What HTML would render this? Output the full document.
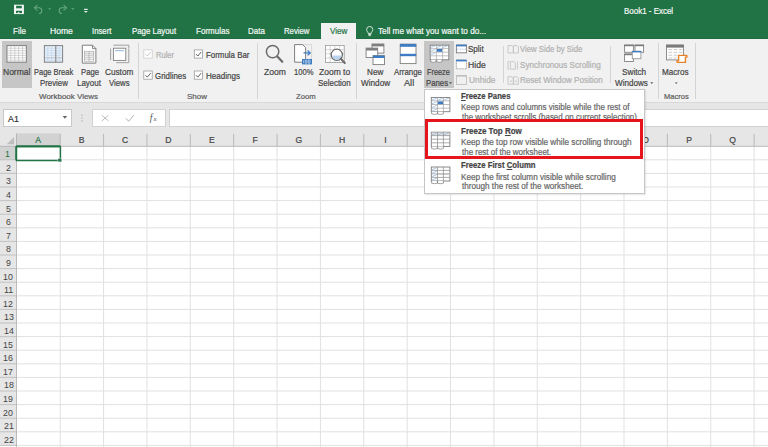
<!DOCTYPE html>
<html><head><meta charset="utf-8"><style>
html,body{margin:0;padding:0;}
body{width:768px;height:447px;overflow:hidden;position:relative;background:#fff;font-family:"Liberation Sans",sans-serif;}
.b{position:absolute;}
.t{position:absolute;white-space:nowrap;transform-origin:0 0;font-family:"Liberation Sans",sans-serif;-webkit-text-stroke:0.2px currentColor;}
body.textonly .b{display:none} body.textonly .t{color:#000 !important} body.textonly{background:#fff}
u{text-decoration:underline;text-underline-offset:1.2px;text-decoration-thickness:0.7px}
</style></head><body>
<div class="b" style="left:0;top:0;width:768px;height:38.8px;background:#217346"></div><div class="b" style="left:0;top:37.6px;width:768px;height:1.2px;background:#1f6a40"></div><div class="b" style="left:0;top:38.8px;width:768px;height:62.8px;background:#f1f1f1"></div><div class="b" style="left:320.8px;top:22.8px;width:35.1px;height:17px;background:#f1f1f1"></div><div class="b" style="left:0;top:101.6px;width:768px;height:1.4px;background:#d9d9d9"></div><div class="b" style="left:0;top:103px;width:768px;height:30.4px;background:#e6e6e6"></div><div class="b" style="left:138.4px;top:42.5px;width:1px;height:56.3px;background:#d4d4d4"></div><div class="b" style="left:257.2px;top:42.5px;width:1px;height:56.3px;background:#d4d4d4"></div><div class="b" style="left:356.3px;top:42.5px;width:1px;height:56.3px;background:#d4d4d4"></div><div class="b" style="left:658.2px;top:42.5px;width:1px;height:56.3px;background:#d4d4d4"></div><div class="b" style="left:694.5px;top:42.5px;width:1px;height:56.3px;background:#d4d4d4"></div><div class="b" style="left:502.5px;top:46.4px;width:1px;height:36.6px;background:#d4d4d4"></div><div class="b" style="left:610.4px;top:46.4px;width:1px;height:36.6px;background:#d4d4d4"></div><div class="b" style="left:2.1px;top:41.2px;width:30.2px;height:46.4px;background:#c6c6c6"></div><div class="b" style="left:424.4px;top:41.2px;width:29.4px;height:46.4px;background:#c6c6c6"></div><div class="b" style="left:2.75px;top:109.25px;width:69.15px;height:17.5px;background:#fff;border:1px solid #c8c8c8;box-sizing:border-box"></div><div class="b" style="left:92.25px;top:109.25px;width:74px;height:17.5px;background:#fff;border:1px solid #d2d2d2;box-sizing:border-box"></div><div class="b" style="left:169.4px;top:109.25px;width:610px;height:17.5px;background:#fff;border:1px solid #d2d2d2;box-sizing:border-box"></div><svg class="b" style="left:0;top:0" width="768" height="135" viewBox="0 0 768 135">
<!-- QAT -->
<rect x="14" y="4.7" width="9.9" height="9.4" fill="#f2f7f4"/>
<rect x="16.1" y="5.8" width="5.7" height="2.5" fill="#217346"/>
<rect x="16" y="10.8" width="6" height="2.3" fill="#217346"/>
<rect x="17.8" y="12.1" width="1.6" height="1.0" fill="#f2f7f4"/>
<g fill="none" stroke="#66a583" stroke-width="1.1" stroke-linecap="round">
<path d="M37 5.3 L34.5 7.8 L37 10.2"/>
<path d="M34.8 7.8 H39.4 A2.9 2.9 0 0 1 39.4 13.5"/>
<path d="M63.9 5.3 L66.4 7.8 L63.9 10.2"/>
<path d="M66.1 7.8 H61.5 A2.9 2.9 0 0 0 61.5 13.5"/>
</g>
<path d="M48.2 8.3 h2.8 l-1.4 1.7z M71.1 8.3 h3.4 l-1.7 1.8z" fill="#66a583"/>
<rect x="84" y="8.8" width="3.7" height="1.1" fill="#f2f7f4"/>
<path d="M83.9 10.9 h3.9 l-1.95 1.9z" fill="#f2f7f4"/>
<!-- lightbulb -->
<path d="M366.6 29.6 a3.1 3.1 0 1 1 6.2 0 c0 1.6 -1.5 2.4 -1.5 3.8 h-3.2 c0 -1.4 -1.5 -2.2 -1.5 -3.8z M368.2 34.6 h3 M368.6 35.6 h2.2" fill="none" stroke="#eef5f1" stroke-width="0.85"/>

<!-- Normal -->
<rect x="7" y="45.6" width="19.4" height="16.6" fill="#fff" stroke="#7d7d7d" stroke-width="1"/>
<g stroke="#c2c2c2" stroke-width="0.7">
<path d="M7 48.2h19.4M7 50.6h19.4M7 53h19.4M7 55.4h19.4M7 57.8h19.4M7 60.2h19.4"/>
<path d="M10.8 45.6v16.6M14.8 45.6v16.6M18.6 45.6v16.6M22.6 45.6v16.6"/>
</g>
<!-- Page break preview -->
<rect x="44.4" y="45.6" width="18.2" height="16.6" fill="#e8f1fb" stroke="#7d7d7d" stroke-width="1"/>
<g stroke="#bcd2ea" stroke-width="0.6">
<path d="M44.4 48.2h18M44.4 50.6h18M44.4 53h18M44.4 55.4h18M44.4 60.2h18"/>
<path d="M47.8 45.6v16.6M51.6 45.6v16.6M59.2 45.6v16.6"/>
</g>
<path d="M55.8 45.6v16.6" stroke="#7d7d7d" stroke-width="1"/>
<path d="M44.4 57.8h18.2" stroke="#9a9a9a" stroke-width="0.9" stroke-dasharray="1.2 0.8"/>
<!-- Page Layout -->
<path d="M82.3 45.2 h10.2 l3.4 3.4 v14.5 h-13.6z" fill="#fff" stroke="#7d7d7d" stroke-width="1"/>
<path d="M92.5 45.2 v3.4 h3.4" fill="none" stroke="#7d7d7d" stroke-width="0.9"/>
<g stroke="#9a9a9a" stroke-width="0.6" fill="none">
<rect x="84.4" y="51.2" width="9.4" height="10"/>
<path d="M84.4 53.2h9.4M84.4 55.2h9.4M84.4 57.2h9.4M84.4 59.2h9.4M89.1 51.2v10"/>
</g>
<!-- Custom views -->
<rect x="113.4" y="48.2" width="12.4" height="12.2" fill="#fff" stroke="#7a7a7a" stroke-width="0.85"/>
<path d="M115 50.6h9" stroke="#a9c4e6" stroke-width="1.3"/>
<path d="M113.4 45.2 h12.4 M110.6 48.6 v11.6 M116.4 62.7 h12.4 v-14.2" fill="none" stroke="#8a8a8a" stroke-width="0.8"/>
<path d="M125.8 45.2 h3 v3" fill="none" stroke="#8a8a8a" stroke-width="0.8"/>
<!-- Zoom -->
<circle cx="272.6" cy="51.6" r="6.2" fill="none" stroke="#6b6b6b" stroke-width="1.5"/>
<path d="M277.3 56.4 l5 5.4" stroke="#6b6b6b" stroke-width="2.2" stroke-linecap="round"/>
<!-- 100% -->
<path d="M294.6 44.6 h8 l3 3 v14.6 h-11z" fill="#fff" stroke="#7d7d7d" stroke-width="1"/>
<path d="M302.6 44.6 h9 v14" fill="none" stroke="#9a9a9a" stroke-width="0.6" stroke-dasharray="1 1"/>
<path d="M303.5 52.9 h6.5 M307.6 50.4 l2.6 2.5 l-2.6 2.5" fill="none" stroke="#3d7cc2" stroke-width="1.3"/>
<rect x="302" y="59" width="10" height="5.4" fill="#3d7cc2"/>
<path d="M303.6 60.2v3M305.4 60.2h1.6v3h-1.6zM308.4 60.2h1.6v3h-1.6z" stroke="#fff" stroke-width="0.5" fill="none"/>
<!-- Zoom to selection -->
<rect x="325.4" y="45.4" width="18.8" height="17" fill="#fff" stroke="#9a9a9a" stroke-width="0.8"/>
<path d="M325.4 49.6h18.8M325.4 53.8h18.8M325.4 58h18.8M330.2 45.4v17M334.8 45.4v17M339.6 45.4v17" stroke="#b8b8b8" stroke-width="0.6"/>
<circle cx="336.8" cy="54.8" r="5.6" fill="#fff" stroke="#6b6b6b" stroke-width="1.3"/>
<path d="M332.2 55.4 a4.6 4.6 0 0 0 9.2 0z" fill="#bcd3ee"/>
<path d="M340.8 58.8 l4 4.2" stroke="#6b6b6b" stroke-width="2" stroke-linecap="round"/>
<!-- New window -->
<rect x="372" y="44" width="11.9" height="9.1" fill="#fff" stroke="#7d7d7d" stroke-width="0.9"/>
<rect x="372" y="44" width="11.9" height="2.4" fill="#7d7d7d"/>
<rect x="366.1" y="48.1" width="11.6" height="9.4" fill="#fff" stroke="#7d7d7d" stroke-width="0.9"/>
<rect x="366.1" y="48.1" width="11.6" height="2.4" fill="#7d7d7d"/>
<rect x="373" y="55.6" width="11.5" height="9" fill="#fff" stroke="#7d7d7d" stroke-width="0.9"/>
<rect x="373" y="55.6" width="11.5" height="2.4" fill="#3d7cc2"/>
<!-- Arrange all -->
<rect x="400.2" y="44.2" width="15.8" height="19.4" fill="#fff" stroke="#7d7d7d" stroke-width="0.9"/>
<rect x="400" y="43.9" width="16.2" height="2.9" fill="#3d7cc2"/>
<rect x="400" y="53.8" width="16.2" height="2.4" fill="#3d7cc2"/>
<!-- Freeze panes (ribbon) -->
<rect x="430.2" y="45.2" width="18.6" height="14.6" fill="#fff" stroke="#7d7d7d" stroke-width="0.9"/>
<path d="M430.2 48.6h18.6M430.2 52.2h18.6M430.2 55.8h18.6M436.4 45.2v14.6M442.6 45.2v14.6" stroke="#9a9a9a" stroke-width="0.6"/>
<path d="M430.6 47.6 l5 -2 M430.6 51.2 l5 -2 M436.8 47.6 l5 -2 M442.8 47.6 l5 -2 M430.6 54.8 l5 -2" stroke="#8fb4e0" stroke-width="0.7"/>
<rect x="436.8" y="49" width="5.4" height="2.8" fill="#3d7cc2"/>
<path d="M430.8 59.8 v2 q2.6 1 5.2 0 v-2 M436.8 59.8 v2 q2.6 1 5.2 0 v-2" fill="#fff" stroke="#7d7d7d" stroke-width="0.7"/>
<!-- split -->
<rect x="456.4" y="45" width="10" height="7.8" fill="#fff" stroke="#7d7d7d" stroke-width="0.9"/>
<rect x="456.1" y="44.7" width="10.6" height="1.7" fill="#3d7cc2"/>
<path d="M457 49.2h9" stroke="#8fb4e0" stroke-width="0.7" stroke-dasharray="1 0.6"/>
<!-- hide -->
<rect x="456.4" y="60" width="10" height="8.8" fill="#fff" stroke="#9a9a9a" stroke-width="0.8" stroke-dasharray="1.2 0.4"/>
<rect x="456.1" y="59.7" width="10.6" height="1.7" fill="#3d7cc2"/>
<!-- unhide -->
<rect x="456.4" y="75.6" width="10" height="8.8" fill="none" stroke="#bdbdbd" stroke-width="0.9"/>
<rect x="456.1" y="75.3" width="10.6" height="1.3" fill="#bdbdbd"/>
<!-- view side by side etc -->
<g fill="none" stroke="#c0c0c0" stroke-width="0.8">
<path d="M508 45.6h4l1.4 1.4v6h-5.4z M513.4 45.6h3.6l1.4 1.4v6h-5z"/>
<path d="M508 61.4h1.2M508 61.4v8M508 69.4h1.2 M510.4 61.6h3.6l1.4 1.4v6.2h-5z M517.6 61.4v8.2"/>
<path d="M508 76.8h4l1.4 1.4v6h-5.4z M513.4 76.8h3.6l1.4 1.4v6h-5z M510 80.5 l0.8 1.5 l0.8 -1.5 M515 80.5 l0.8 1.5 l0.8 -1.5"/>
</g>
<!-- Switch windows -->
<rect x="624.6" y="45.1" width="8.8" height="7.2" fill="#fff" stroke="#808080" stroke-width="0.9"/>
<rect x="624.2" y="44.7" width="9.6" height="1.5" fill="#7a7a7a"/>
<rect x="635" y="45.1" width="8.6" height="7.2" fill="#fff" stroke="#808080" stroke-width="0.9"/>
<rect x="634.6" y="44.7" width="9.4" height="1.5" fill="#7a7a7a"/>
<rect x="624.6" y="54.1" width="8.8" height="7.4" fill="#fff" stroke="#808080" stroke-width="0.9"/>
<rect x="624.2" y="53.7" width="9.6" height="1.5" fill="#7a7a7a"/>
<rect x="632.3" y="51.3" width="8.6" height="7.4" fill="#fff" stroke="#9a9a9a" stroke-width="0.9"/>
<rect x="631.9" y="50.9" width="9.4" height="1.5" fill="#3d7cc2"/>
<!-- Macros -->
<rect x="666.5" y="45.1" width="16.9" height="14.8" fill="#fff" stroke="#808080" stroke-width="0.9"/>
<rect x="666.1" y="44.7" width="17.7" height="2.9" fill="#7a7a7a"/>
<path d="M668.4 49.6h3.6M673.6 49.6h3.6M678.8 49.6h3.4M668.4 52.4h3.6M673.6 52.4h3.6M678.8 52.4h3.4M668.4 55.2h3.6M673.6 55.2h3.6M668.4 58h3.6M673.6 58h3" stroke="#bdbdbd" stroke-width="0.8"/>
<path d="M678.6 55.4 h7.6 a0.9 0.9 0 0 1 0 1.8 h-0.8 v5.2 h-7.6 a0.9 0.9 0 0 1 0 -1.8 h0.8z" fill="#fff" stroke="#e8832a" stroke-width="1.4"/>
<!-- dropdown arrows -->
<path d="M448.9 82.2 h3.2 l-1.6 1.8z M650.3 82.2 h3 l-1.5 1.7z M674.7 82.4 h3 l-1.5 1.7z" fill="#555"/>
<!-- checkboxes -->
<g fill="#fff" stroke-width="0.8">
<rect x="143.8" y="49.9" width="8.4" height="8.2" stroke="#cdcdcd"/>
<rect x="143.8" y="71" width="8.4" height="8.2" stroke="#9c9c9c"/>
<rect x="194.3" y="49.9" width="8.2" height="8.2" stroke="#9c9c9c"/>
<rect x="194.3" y="71" width="8.2" height="8.2" stroke="#9c9c9c"/>
</g>
<g fill="none" stroke-width="0.9">
<path d="M145.6 54.2 l1.7 1.8 l3.4 -4" stroke="#c6c6c6"/>
<path d="M145.6 75.3 l1.7 1.8 l3.4 -4" stroke="#4a4a4a"/>
<path d="M196.1 54.2 l1.7 1.8 l3.4 -4" stroke="#4a4a4a"/>
<path d="M196.1 75.3 l1.7 1.8 l3.4 -4" stroke="#4a4a4a"/>
</g>
<!-- formula bar glyphs -->
<path d="M62.6 115.9 h4.6 l-2.3 2.8z" fill="#666"/>
<g fill="#a6a6a6"><circle cx="82" cy="115.2" r="0.65"/><circle cx="82" cy="118.1" r="0.65"/><circle cx="82" cy="121" r="0.65"/></g>
<path d="M101.8 115.2 l6.6 5.8 M108.4 115.2 l-6.6 5.8" stroke="#b3b3b3" stroke-width="0.9"/>
<path d="M125.8 118.2 l2.9 3.1 l5.1 -6.1" fill="none" stroke="#b3b3b3" stroke-width="1"/>
<text x="149.8" y="120.6" font-family="Liberation Serif" font-style="italic" font-size="9.5" fill="#555">f</text>
<text x="153.4" y="121.3" font-family="Liberation Serif" font-style="italic" font-size="7" fill="#555">x</text>
</svg>
<svg class="b" style="left:0;top:0" width="768" height="447" viewBox="0 0 768 447"><rect x="0" y="130" width="768" height="16.19999999999999" fill="#e6e6e6"/><rect x="0" y="146.2" width="16.3" height="300.8" fill="#e6e6e6"/><rect x="0" y="445.4" width="768" height="5" fill="#fff"/><rect x="16.3" y="133.4" width="43.900000000000006" height="12.799999999999983" fill="#d2d2d2"/><rect x="0" y="146.2" width="16.3" height="13.6" fill="#d2d2d2"/><line x1="60.20" y1="146.2" x2="60.20" y2="447" stroke="#e1e1e1" stroke-width="1"/><line x1="60.20" y1="133.8" x2="60.20" y2="146.2" stroke="#a9a9a9" stroke-width="0.75"/><line x1="103.57" y1="146.2" x2="103.57" y2="447" stroke="#e1e1e1" stroke-width="1"/><line x1="103.57" y1="133.8" x2="103.57" y2="146.2" stroke="#a9a9a9" stroke-width="0.75"/><line x1="146.94" y1="146.2" x2="146.94" y2="447" stroke="#e1e1e1" stroke-width="1"/><line x1="146.94" y1="133.8" x2="146.94" y2="146.2" stroke="#a9a9a9" stroke-width="0.75"/><line x1="190.31" y1="146.2" x2="190.31" y2="447" stroke="#e1e1e1" stroke-width="1"/><line x1="190.31" y1="133.8" x2="190.31" y2="146.2" stroke="#a9a9a9" stroke-width="0.75"/><line x1="233.68" y1="146.2" x2="233.68" y2="447" stroke="#e1e1e1" stroke-width="1"/><line x1="233.68" y1="133.8" x2="233.68" y2="146.2" stroke="#a9a9a9" stroke-width="0.75"/><line x1="277.05" y1="146.2" x2="277.05" y2="447" stroke="#e1e1e1" stroke-width="1"/><line x1="277.05" y1="133.8" x2="277.05" y2="146.2" stroke="#a9a9a9" stroke-width="0.75"/><line x1="320.42" y1="146.2" x2="320.42" y2="447" stroke="#e1e1e1" stroke-width="1"/><line x1="320.42" y1="133.8" x2="320.42" y2="146.2" stroke="#a9a9a9" stroke-width="0.75"/><line x1="363.79" y1="146.2" x2="363.79" y2="447" stroke="#e1e1e1" stroke-width="1"/><line x1="363.79" y1="133.8" x2="363.79" y2="146.2" stroke="#a9a9a9" stroke-width="0.75"/><line x1="407.16" y1="146.2" x2="407.16" y2="447" stroke="#e1e1e1" stroke-width="1"/><line x1="407.16" y1="133.8" x2="407.16" y2="146.2" stroke="#a9a9a9" stroke-width="0.75"/><line x1="450.53" y1="146.2" x2="450.53" y2="447" stroke="#e1e1e1" stroke-width="1"/><line x1="450.53" y1="133.8" x2="450.53" y2="146.2" stroke="#a9a9a9" stroke-width="0.75"/><line x1="493.90" y1="146.2" x2="493.90" y2="447" stroke="#e1e1e1" stroke-width="1"/><line x1="493.90" y1="133.8" x2="493.90" y2="146.2" stroke="#a9a9a9" stroke-width="0.75"/><line x1="537.27" y1="146.2" x2="537.27" y2="447" stroke="#e1e1e1" stroke-width="1"/><line x1="537.27" y1="133.8" x2="537.27" y2="146.2" stroke="#a9a9a9" stroke-width="0.75"/><line x1="580.64" y1="146.2" x2="580.64" y2="447" stroke="#e1e1e1" stroke-width="1"/><line x1="580.64" y1="133.8" x2="580.64" y2="146.2" stroke="#a9a9a9" stroke-width="0.75"/><line x1="624.01" y1="146.2" x2="624.01" y2="447" stroke="#e1e1e1" stroke-width="1"/><line x1="624.01" y1="133.8" x2="624.01" y2="146.2" stroke="#a9a9a9" stroke-width="0.75"/><line x1="667.38" y1="146.2" x2="667.38" y2="447" stroke="#e1e1e1" stroke-width="1"/><line x1="667.38" y1="133.8" x2="667.38" y2="146.2" stroke="#a9a9a9" stroke-width="0.75"/><line x1="710.75" y1="146.2" x2="710.75" y2="447" stroke="#e1e1e1" stroke-width="1"/><line x1="710.75" y1="133.8" x2="710.75" y2="146.2" stroke="#a9a9a9" stroke-width="0.75"/><line x1="754.12" y1="146.2" x2="754.12" y2="447" stroke="#e1e1e1" stroke-width="1"/><line x1="754.12" y1="133.8" x2="754.12" y2="146.2" stroke="#a9a9a9" stroke-width="0.75"/><line x1="16.3" y1="159.80" x2="768" y2="159.80" stroke="#e1e1e1" stroke-width="1"/><line x1="0" y1="159.80" x2="16.3" y2="159.80" stroke="#bdbdbd" stroke-width="0.9"/><line x1="16.3" y1="173.40" x2="768" y2="173.40" stroke="#e1e1e1" stroke-width="1"/><line x1="0" y1="173.40" x2="16.3" y2="173.40" stroke="#bdbdbd" stroke-width="0.9"/><line x1="16.3" y1="187.00" x2="768" y2="187.00" stroke="#e1e1e1" stroke-width="1"/><line x1="0" y1="187.00" x2="16.3" y2="187.00" stroke="#bdbdbd" stroke-width="0.9"/><line x1="16.3" y1="200.60" x2="768" y2="200.60" stroke="#e1e1e1" stroke-width="1"/><line x1="0" y1="200.60" x2="16.3" y2="200.60" stroke="#bdbdbd" stroke-width="0.9"/><line x1="16.3" y1="214.20" x2="768" y2="214.20" stroke="#e1e1e1" stroke-width="1"/><line x1="0" y1="214.20" x2="16.3" y2="214.20" stroke="#bdbdbd" stroke-width="0.9"/><line x1="16.3" y1="227.80" x2="768" y2="227.80" stroke="#e1e1e1" stroke-width="1"/><line x1="0" y1="227.80" x2="16.3" y2="227.80" stroke="#bdbdbd" stroke-width="0.9"/><line x1="16.3" y1="241.40" x2="768" y2="241.40" stroke="#e1e1e1" stroke-width="1"/><line x1="0" y1="241.40" x2="16.3" y2="241.40" stroke="#bdbdbd" stroke-width="0.9"/><line x1="16.3" y1="255.00" x2="768" y2="255.00" stroke="#e1e1e1" stroke-width="1"/><line x1="0" y1="255.00" x2="16.3" y2="255.00" stroke="#bdbdbd" stroke-width="0.9"/><line x1="16.3" y1="268.60" x2="768" y2="268.60" stroke="#e1e1e1" stroke-width="1"/><line x1="0" y1="268.60" x2="16.3" y2="268.60" stroke="#bdbdbd" stroke-width="0.9"/><line x1="16.3" y1="282.20" x2="768" y2="282.20" stroke="#e1e1e1" stroke-width="1"/><line x1="0" y1="282.20" x2="16.3" y2="282.20" stroke="#bdbdbd" stroke-width="0.9"/><line x1="16.3" y1="295.80" x2="768" y2="295.80" stroke="#e1e1e1" stroke-width="1"/><line x1="0" y1="295.80" x2="16.3" y2="295.80" stroke="#bdbdbd" stroke-width="0.9"/><line x1="16.3" y1="309.40" x2="768" y2="309.40" stroke="#e1e1e1" stroke-width="1"/><line x1="0" y1="309.40" x2="16.3" y2="309.40" stroke="#bdbdbd" stroke-width="0.9"/><line x1="16.3" y1="323.00" x2="768" y2="323.00" stroke="#e1e1e1" stroke-width="1"/><line x1="0" y1="323.00" x2="16.3" y2="323.00" stroke="#bdbdbd" stroke-width="0.9"/><line x1="16.3" y1="336.60" x2="768" y2="336.60" stroke="#e1e1e1" stroke-width="1"/><line x1="0" y1="336.60" x2="16.3" y2="336.60" stroke="#bdbdbd" stroke-width="0.9"/><line x1="16.3" y1="350.20" x2="768" y2="350.20" stroke="#e1e1e1" stroke-width="1"/><line x1="0" y1="350.20" x2="16.3" y2="350.20" stroke="#bdbdbd" stroke-width="0.9"/><line x1="16.3" y1="363.80" x2="768" y2="363.80" stroke="#e1e1e1" stroke-width="1"/><line x1="0" y1="363.80" x2="16.3" y2="363.80" stroke="#bdbdbd" stroke-width="0.9"/><line x1="16.3" y1="377.40" x2="768" y2="377.40" stroke="#e1e1e1" stroke-width="1"/><line x1="0" y1="377.40" x2="16.3" y2="377.40" stroke="#bdbdbd" stroke-width="0.9"/><line x1="16.3" y1="391.00" x2="768" y2="391.00" stroke="#e1e1e1" stroke-width="1"/><line x1="0" y1="391.00" x2="16.3" y2="391.00" stroke="#bdbdbd" stroke-width="0.9"/><line x1="16.3" y1="404.60" x2="768" y2="404.60" stroke="#e1e1e1" stroke-width="1"/><line x1="0" y1="404.60" x2="16.3" y2="404.60" stroke="#bdbdbd" stroke-width="0.9"/><line x1="16.3" y1="418.20" x2="768" y2="418.20" stroke="#e1e1e1" stroke-width="1"/><line x1="0" y1="418.20" x2="16.3" y2="418.20" stroke="#bdbdbd" stroke-width="0.9"/><line x1="16.3" y1="431.80" x2="768" y2="431.80" stroke="#e1e1e1" stroke-width="1"/><line x1="0" y1="431.80" x2="16.3" y2="431.80" stroke="#bdbdbd" stroke-width="0.9"/><line x1="16.3" y1="445.40" x2="768" y2="445.40" stroke="#e1e1e1" stroke-width="1"/><line x1="0" y1="445.40" x2="16.3" y2="445.40" stroke="#bdbdbd" stroke-width="0.9"/><line x1="0" y1="146.3" x2="768" y2="146.3" stroke="#b3b3b3" stroke-width="0.9"/><line x1="16.5" y1="133.4" x2="16.5" y2="447" stroke="#b3b3b3" stroke-width="0.9"/><line x1="16.3" y1="145.79999999999998" x2="60.2" y2="145.79999999999998" stroke="#217346" stroke-width="1.2"/><line x1="15.9" y1="146.2" x2="15.9" y2="159.79999999999998" stroke="#217346" stroke-width="1.2"/><path d="M14.1 137.1 V144.3 H6.7z" fill="#bfbfbf"/><rect x="16.45" y="146.7" width="43.95" height="13.8" fill="none" stroke="#217346" stroke-width="1.5"/><rect x="57.9" y="158.5" width="3.8" height="3.4" fill="#217346" stroke="#fff" stroke-width="0.4"/></svg><div class="t" data-k="k0" style="left:624.27px;top:7.00px;font-size:8.7px;line-height:8.7px;color:#f4f8f5;font-weight:normal;transform:scaleX(0.9163);">Book1 - Excel</div><div class="t" data-k="k1" style="left:12.58px;top:27.00px;font-size:8.7px;line-height:8.7px;color:#f4f8f5;font-weight:normal;transform:scaleX(0.9219);">File</div><div class="t" data-k="k2" style="left:50.34px;top:27.00px;font-size:8.7px;line-height:8.7px;color:#f4f8f5;font-weight:normal;transform:scaleX(0.9878);">Home</div><div class="t" data-k="k3" style="left:92.21px;top:27.00px;font-size:8.7px;line-height:8.7px;color:#f4f8f5;font-weight:normal;transform:scaleX(0.8945);">Insert</div><div class="t" data-k="k4" style="left:132.18px;top:27.00px;font-size:8.7px;line-height:8.7px;color:#f4f8f5;font-weight:normal;transform:scaleX(0.9035);">Page Layout</div><div class="t" data-k="k5" style="left:196.01px;top:27.00px;font-size:8.7px;line-height:8.7px;color:#f4f8f5;font-weight:normal;transform:scaleX(0.9289);">Formulas</div><div class="t" data-k="k6" style="left:248.20px;top:27.00px;font-size:8.7px;line-height:8.7px;color:#f4f8f5;font-weight:normal;transform:scaleX(0.9184);">Data</div><div class="t" data-k="k7" style="left:284.29px;top:27.00px;font-size:8.7px;line-height:8.7px;color:#f4f8f5;font-weight:normal;transform:scaleX(0.8914);">Review</div><div class="t" data-k="k8" style="left:329.61px;top:27.00px;font-size:8.7px;line-height:8.7px;color:#217346;font-weight:normal;transform:scaleX(0.9275);">View</div><div class="t" data-k="k9" style="left:377.99px;top:27.00px;font-size:8.7px;line-height:8.7px;color:#f4f8f5;font-weight:normal;transform:scaleX(0.9450);">Tell me what you want to do...</div><div class="t" data-k="k10" style="left:3.05px;top:68.00px;font-size:9.0px;line-height:9.0px;color:#444;font-weight:normal;transform:scaleX(0.9452);">Normal</div><div class="t" data-k="k11" style="left:33.90px;top:68.00px;font-size:9.0px;line-height:9.0px;color:#444;font-weight:normal;transform:scaleX(0.8322);">Page Break</div><div class="t" data-k="k12" style="left:39.55px;top:79.00px;font-size:9.0px;line-height:9.0px;color:#444;font-weight:normal;transform:scaleX(0.8700);">Preview</div><div class="t" data-k="k13" style="left:80.59px;top:68.00px;font-size:9.0px;line-height:9.0px;color:#444;font-weight:normal;transform:scaleX(0.8561);">Page</div><div class="t" data-k="k14" style="left:77.18px;top:79.00px;font-size:9.0px;line-height:9.0px;color:#444;font-weight:normal;transform:scaleX(0.8819);">Layout</div><div class="t" data-k="k15" style="left:105.43px;top:68.00px;font-size:9.0px;line-height:9.0px;color:#444;font-weight:normal;transform:scaleX(0.9133);">Custom</div><div class="t" data-k="k16" style="left:108.61px;top:79.00px;font-size:9.0px;line-height:9.0px;color:#444;font-weight:normal;transform:scaleX(0.8624);">Views</div><div class="t" data-k="k17" style="left:263.57px;top:68.00px;font-size:9.0px;line-height:9.0px;color:#444;font-weight:normal;transform:scaleX(0.9509);">Zoom</div><div class="t" data-k="k18" style="left:293.83px;top:68.00px;font-size:9.0px;line-height:9.0px;color:#444;font-weight:normal;transform:scaleX(0.8441);">100%</div><div class="t" data-k="k19" style="left:318.88px;top:68.00px;font-size:9.0px;line-height:9.0px;color:#444;font-weight:normal;transform:scaleX(0.9455);">Zoom to</div><div class="t" data-k="k20" style="left:318.43px;top:79.00px;font-size:9.0px;line-height:9.0px;color:#444;font-weight:normal;transform:scaleX(0.8836);">Selection</div><div class="t" data-k="k21" style="left:367.45px;top:68.00px;font-size:9.0px;line-height:9.0px;color:#444;font-weight:normal;transform:scaleX(0.9043);">New</div><div class="t" data-k="k22" style="left:361.29px;top:79.00px;font-size:9.0px;line-height:9.0px;color:#444;font-weight:normal;transform:scaleX(0.9091);">Window</div><div class="t" data-k="k23" style="left:394.28px;top:68.00px;font-size:9.0px;line-height:9.0px;color:#444;font-weight:normal;transform:scaleX(0.8714);">Arrange</div><div class="t" data-k="k24" style="left:403.53px;top:79.00px;font-size:9.0px;line-height:9.0px;color:#444;font-weight:normal;transform:scaleX(1.0160);">All</div><div class="t" data-k="k25" style="left:426.92px;top:68.00px;font-size:9.0px;line-height:9.0px;color:#444;font-weight:normal;transform:scaleX(0.8133);">Freeze</div><div class="t" data-k="k26" style="left:425.59px;top:79.00px;font-size:9.0px;line-height:9.0px;color:#444;font-weight:normal;transform:scaleX(0.8653);">Panes</div><div class="t" data-k="k27" style="left:621.66px;top:68.00px;font-size:9.0px;line-height:9.0px;color:#444;font-weight:normal;transform:scaleX(0.9105);">Switch</div><div class="t" data-k="k28" style="left:615.11px;top:79.00px;font-size:9.0px;line-height:9.0px;color:#444;font-weight:normal;transform:scaleX(0.9017);">Windows</div><div class="t" data-k="k29" style="left:662.43px;top:68.00px;font-size:9.0px;line-height:9.0px;color:#444;font-weight:normal;transform:scaleX(0.9035);">Macros</div><div class="t" data-k="k30" style="left:38.57px;top:93.00px;font-size:7.9px;line-height:7.9px;color:#5c5c5c;font-weight:normal;transform:scaleX(1.0109);">Workbook Views</div><div class="t" data-k="k31" style="left:187.02px;top:93.00px;font-size:7.9px;line-height:7.9px;color:#5c5c5c;font-weight:normal;transform:scaleX(1.0145);">Show</div><div class="t" data-k="k32" style="left:296.43px;top:93.00px;font-size:7.9px;line-height:7.9px;color:#5c5c5c;font-weight:normal;transform:scaleX(0.9761);">Zoom</div><div class="t" data-k="k33" style="left:663.57px;top:93.00px;font-size:7.9px;line-height:7.9px;color:#5c5c5c;font-weight:normal;transform:scaleX(0.9600);">Macros</div><div class="t" data-k="k34" style="left:155.72px;top:51.00px;font-size:8.6px;line-height:8.6px;color:#b0b0b0;font-weight:normal;transform:scaleX(0.8770);">Ruler</div><div class="t" data-k="k35" style="left:155.37px;top:72.00px;font-size:8.6px;line-height:8.6px;color:#444;font-weight:normal;transform:scaleX(0.9179);">Gridlines</div><div class="t" data-k="k36" style="left:206.10px;top:51.00px;font-size:8.6px;line-height:8.6px;color:#444;font-weight:normal;transform:scaleX(0.9187);">Formula Bar</div><div class="t" data-k="k37" style="left:205.95px;top:72.00px;font-size:8.6px;line-height:8.6px;color:#444;font-weight:normal;transform:scaleX(0.9352);">Headings</div><div class="t" data-k="k38" style="left:468.38px;top:45.00px;font-size:8.6px;line-height:8.6px;color:#444;font-weight:normal;transform:scaleX(0.9339);">Split</div><div class="t" data-k="k39" style="left:468.32px;top:61.00px;font-size:8.6px;line-height:8.6px;color:#444;font-weight:normal;transform:scaleX(1.0039);">Hide</div><div class="t" data-k="k40" style="left:468.67px;top:76.00px;font-size:8.6px;line-height:8.6px;color:#b0b0b0;font-weight:normal;transform:scaleX(0.9699);">Unhide</div><div class="t" data-k="k41" style="left:519.87px;top:45.00px;font-size:8.6px;line-height:8.6px;color:#b0b0b0;font-weight:normal;transform:scaleX(0.9005);">View Side by Side</div><div class="t" data-k="k42" style="left:520.01px;top:61.00px;font-size:8.6px;line-height:8.6px;color:#b0b0b0;font-weight:normal;transform:scaleX(0.9434);">Synchronous Scrolling</div><div class="t" data-k="k43" style="left:520.31px;top:76.00px;font-size:8.6px;line-height:8.6px;color:#b0b0b0;font-weight:normal;transform:scaleX(0.9360);">Reset Window Position</div><div class="t" data-k="k44" style="left:7.58px;top:114.00px;font-size:9.9px;line-height:9.9px;color:#333;font-weight:normal;transform:scaleX(0.8941);">A1</div><div class="t" data-k="k45" style="left:35.26px;top:136.00px;font-size:8.6px;line-height:8.6px;color:#217346;font-weight:normal;">A</div><div class="t" data-k="k46" style="left:78.86px;top:136.00px;font-size:8.6px;line-height:8.6px;color:#444;font-weight:normal;">B</div><div class="t" data-k="k47" style="left:122.06px;top:136.00px;font-size:8.6px;line-height:8.6px;color:#444;font-weight:normal;">C</div><div class="t" data-k="k48" style="left:165.34px;top:136.00px;font-size:8.6px;line-height:8.6px;color:#444;font-weight:normal;">D</div><div class="t" data-k="k49" style="left:208.96px;top:136.00px;font-size:8.6px;line-height:8.6px;color:#444;font-weight:normal;">E</div><div class="t" data-k="k50" style="left:252.52px;top:136.00px;font-size:8.6px;line-height:8.6px;color:#444;font-weight:normal;">F</div><div class="t" data-k="k51" style="left:295.45px;top:136.00px;font-size:8.6px;line-height:8.6px;color:#444;font-weight:normal;">G</div><div class="t" data-k="k52" style="left:338.89px;top:136.00px;font-size:8.6px;line-height:8.6px;color:#444;font-weight:normal;">H</div><div class="t" data-k="k53" style="left:384.17px;top:136.00px;font-size:8.6px;line-height:8.6px;color:#444;font-weight:normal;">I</div><div class="t" data-k="k54" style="left:426.70px;top:136.00px;font-size:8.6px;line-height:8.6px;color:#444;font-weight:normal;">J</div><div class="t" data-k="k55" style="left:469.17px;top:136.00px;font-size:8.6px;line-height:8.6px;color:#444;font-weight:normal;">K</div><div class="t" data-k="k56" style="left:513.01px;top:136.00px;font-size:8.6px;line-height:8.6px;color:#444;font-weight:normal;">L</div><div class="t" data-k="k57" style="left:555.36px;top:136.00px;font-size:8.6px;line-height:8.6px;color:#444;font-weight:normal;">M</div><div class="t" data-k="k58" style="left:599.22px;top:136.00px;font-size:8.6px;line-height:8.6px;color:#444;font-weight:normal;">N</div><div class="t" data-k="k59" style="left:642.27px;top:136.00px;font-size:8.6px;line-height:8.6px;color:#444;font-weight:normal;">O</div><div class="t" data-k="k60" style="left:686.15px;top:136.00px;font-size:8.6px;line-height:8.6px;color:#444;font-weight:normal;">P</div><div class="t" data-k="k61" style="left:729.13px;top:136.00px;font-size:8.6px;line-height:8.6px;color:#444;font-weight:normal;">Q</div><div class="t" data-k="k62" style="left:5.34px;top:149.00px;font-size:9.8px;line-height:9.8px;color:#217346;font-weight:normal;transform:scaleX(0.9000);-webkit-text-stroke:0;">1</div><div class="t" data-k="k63" style="left:5.95px;top:163.00px;font-size:9.8px;line-height:9.8px;color:#444;font-weight:normal;transform:scaleX(0.9000);-webkit-text-stroke:0;">2</div><div class="t" data-k="k64" style="left:5.86px;top:176.00px;font-size:9.8px;line-height:9.8px;color:#444;font-weight:normal;transform:scaleX(0.9000);-webkit-text-stroke:0;">3</div><div class="t" data-k="k65" style="left:5.90px;top:190.00px;font-size:9.8px;line-height:9.8px;color:#444;font-weight:normal;transform:scaleX(0.9000);-webkit-text-stroke:0;">4</div><div class="t" data-k="k66" style="left:5.65px;top:204.00px;font-size:9.8px;line-height:9.8px;color:#444;font-weight:normal;transform:scaleX(0.9000);-webkit-text-stroke:0;">5</div><div class="t" data-k="k67" style="left:5.85px;top:217.00px;font-size:9.8px;line-height:9.8px;color:#444;font-weight:normal;transform:scaleX(0.9000);-webkit-text-stroke:0;">6</div><div class="t" data-k="k68" style="left:5.50px;top:231.00px;font-size:9.8px;line-height:9.8px;color:#444;font-weight:normal;transform:scaleX(0.9000);-webkit-text-stroke:0;">7</div><div class="t" data-k="k69" style="left:5.84px;top:244.00px;font-size:9.8px;line-height:9.8px;color:#444;font-weight:normal;transform:scaleX(0.9000);-webkit-text-stroke:0;">8</div><div class="t" data-k="k70" style="left:5.74px;top:258.00px;font-size:9.8px;line-height:9.8px;color:#444;font-weight:normal;transform:scaleX(0.9000);-webkit-text-stroke:0;">9</div><div class="t" data-k="k71" style="left:3.34px;top:272.00px;font-size:9.8px;line-height:9.8px;color:#444;font-weight:normal;transform:scaleX(0.9000);-webkit-text-stroke:0;">10</div><div class="t" data-k="k72" style="left:3.77px;top:285.00px;font-size:9.8px;line-height:9.8px;color:#444;font-weight:normal;transform:scaleX(0.9000);-webkit-text-stroke:0;">11</div><div class="t" data-k="k73" style="left:2.97px;top:299.00px;font-size:9.8px;line-height:9.8px;color:#444;font-weight:normal;transform:scaleX(0.9000);-webkit-text-stroke:0;">12</div><div class="t" data-k="k74" style="left:3.51px;top:312.00px;font-size:9.8px;line-height:9.8px;color:#444;font-weight:normal;transform:scaleX(0.9000);-webkit-text-stroke:0;">13</div><div class="t" data-k="k75" style="left:3.51px;top:326.00px;font-size:9.8px;line-height:9.8px;color:#444;font-weight:normal;transform:scaleX(0.9000);-webkit-text-stroke:0;">14</div><div class="t" data-k="k76" style="left:3.44px;top:340.00px;font-size:9.8px;line-height:9.8px;color:#444;font-weight:normal;transform:scaleX(0.9000);-webkit-text-stroke:0;">15</div><div class="t" data-k="k77" style="left:3.45px;top:353.00px;font-size:9.8px;line-height:9.8px;color:#444;font-weight:normal;transform:scaleX(0.9000);-webkit-text-stroke:0;">16</div><div class="t" data-k="k78" style="left:3.48px;top:367.00px;font-size:9.8px;line-height:9.8px;color:#444;font-weight:normal;transform:scaleX(0.9000);-webkit-text-stroke:0;">17</div><div class="t" data-k="k79" style="left:3.51px;top:380.00px;font-size:9.8px;line-height:9.8px;color:#444;font-weight:normal;transform:scaleX(0.9000);-webkit-text-stroke:0;">18</div><div class="t" data-k="k80" style="left:3.48px;top:394.00px;font-size:9.8px;line-height:9.8px;color:#444;font-weight:normal;transform:scaleX(0.9000);-webkit-text-stroke:0;">19</div><div class="t" data-k="k81" style="left:3.34px;top:408.00px;font-size:9.8px;line-height:9.8px;color:#444;font-weight:normal;transform:scaleX(0.9000);-webkit-text-stroke:0;">20</div><div class="t" data-k="k82" style="left:3.62px;top:421.00px;font-size:9.8px;line-height:9.8px;color:#444;font-weight:normal;transform:scaleX(0.9000);-webkit-text-stroke:0;">21</div><div class="t" data-k="k83" style="left:3.62px;top:435.00px;font-size:9.8px;line-height:9.8px;color:#444;font-weight:normal;transform:scaleX(0.9000);-webkit-text-stroke:0;">22</div><div class="b" style="left:424.3px;top:88.5px;width:220.4px;height:105.4px;background:#fff;border:1px solid #c6c6c6;box-sizing:border-box;box-shadow:1px 1px 1.5px rgba(0,0,0,0.10)"></div><svg class="b" style="left:0;top:0" width="768" height="200" viewBox="0 0 768 200">
<g id="mi">
</g>
<!-- item 1: x 431-450, y 97.3-111.7, torn to 114.5 -->
<rect x="431.3" y="97.5" width="18.6" height="14.2" fill="#fff" stroke="#7d7d7d" stroke-width="0.9"/>
<path d="M431.3 100.8h18.6M431.3 104.5h18.6M431.3 108.2h18.6M437.5 97.5v14.2M443.4 97.5v14.2" stroke="#a0a0a0" stroke-width="0.7"/>
<path d="M432 100 l5 -2 M432 103.7 l5 -2 M432 107.4 l5 -2 M432 111 l5 -2 M438.2 100 l4.8 -2 M444 100 l5 -2" stroke="#8fb4e0" stroke-width="0.7"/>
<rect x="437.9" y="101.4" width="5.2" height="2.8" fill="#3d7cc2"/>
<path d="M431.6 111.7 v2.2 q2.9 1 5.8 0 v-2.2 M437.6 111.7 v2.2 q2.9 1 5.8 0 v-2.2" fill="#fff" stroke="#7d7d7d" stroke-width="0.7"/>
<!-- item 2 -->
<rect x="431.3" y="132.2" width="18.6" height="14.2" fill="#fff" stroke="#7d7d7d" stroke-width="0.9"/>
<rect x="431.8" y="132.7" width="17.6" height="2.9" fill="#e4e4e4"/>
<path d="M431.3 135.6h18.6M431.3 139.2h18.6M431.3 142.8h18.6M437.5 132.2v14.2M443.4 132.2v14.2" stroke="#8a8a8a" stroke-width="0.7"/>
<path d="M432 134.8 l5 -2 M438.2 134.8 l4.8 -2 M444 134.8 l5 -2" stroke="#8fb4e0" stroke-width="0.7"/>
<path d="M431.6 146.4 v2.2 q2.9 1 5.8 0 v-2.2 M437.6 146.4 v2.2 q2.9 1 5.8 0 v-2.2" fill="#fff" stroke="#7d7d7d" stroke-width="0.7"/>
<!-- item 3 -->
<rect x="431.3" y="167" width="18.6" height="14" fill="#fff" stroke="#7d7d7d" stroke-width="0.9"/>
<rect x="437.8" y="173.4" width="11.6" height="1.6" fill="#e6e6e6"/>
<path d="M431.3 170.4h18.6M431.3 173.9h18.6M431.3 177.4h18.6M437.5 167v14M443.4 167v14" stroke="#8a8a8a" stroke-width="0.7"/>
<path d="M432 169.6 l5 -2 M432 173.1 l5 -2 M432 176.6 l5 -2 M432 180.1 l5 -2" stroke="#8fb4e0" stroke-width="0.7"/>
<path d="M431.6 181 v2.2 q2.9 1 5.8 0 v-2.2 M437.6 181 v2.2 q2.9 1 5.8 0 v-2.2" fill="#fff" stroke="#7d7d7d" stroke-width="0.7"/>
</svg>

<div class="t" data-k="k84" style="left:461.34px;top:92.00px;font-size:8.4px;line-height:8.4px;color:#444;font-weight:bold;transform:scaleX(0.9240);"><u>F</u>reeze Panes</div><div class="t" data-k="k85" style="left:461.28px;top:103.00px;font-size:8.4px;line-height:8.4px;color:#666;font-weight:normal;transform:scaleX(0.9572);">Keep rows and columns visible while the rest of</div><div class="t" data-k="k86" style="left:461.56px;top:113.00px;font-size:8.4px;line-height:8.4px;color:#666;font-weight:normal;transform:scaleX(0.9488);">the worksheet scrolls (based on current selection).</div><div class="t" data-k="k87" style="left:460.75px;top:127.00px;font-size:8.4px;line-height:8.4px;color:#444;font-weight:bold;transform:scaleX(0.9559);">Freeze Top <u>R</u>ow</div><div class="t" data-k="k88" style="left:460.61px;top:138.00px;font-size:8.4px;line-height:8.4px;color:#666;font-weight:normal;transform:scaleX(0.9794);">Keep the top row visible while scrolling through</div><div class="t" data-k="k89" style="left:461.58px;top:148.00px;font-size:8.4px;line-height:8.4px;color:#666;font-weight:normal;transform:scaleX(0.9488);">the rest of the worksheet.</div><div class="t" data-k="k90" style="left:460.82px;top:161.00px;font-size:8.4px;line-height:8.4px;color:#444;font-weight:bold;transform:scaleX(0.9254);">Freeze First <u>C</u>olumn</div><div class="t" data-k="k91" style="left:460.60px;top:173.00px;font-size:8.4px;line-height:8.4px;color:#666;font-weight:normal;transform:scaleX(0.9749);">Keep the first column visible while scrolling</div><div class="t" data-k="k92" style="left:461.58px;top:182.00px;font-size:8.4px;line-height:8.4px;color:#666;font-weight:normal;transform:scaleX(0.9718);">through the rest of the worksheet.</div>
<div class="b" style="left:424.95px;top:119.1px;width:217.8px;height:40.2px;border:3.7px solid #e5141d;box-sizing:border-box"></div>
</body></html>
